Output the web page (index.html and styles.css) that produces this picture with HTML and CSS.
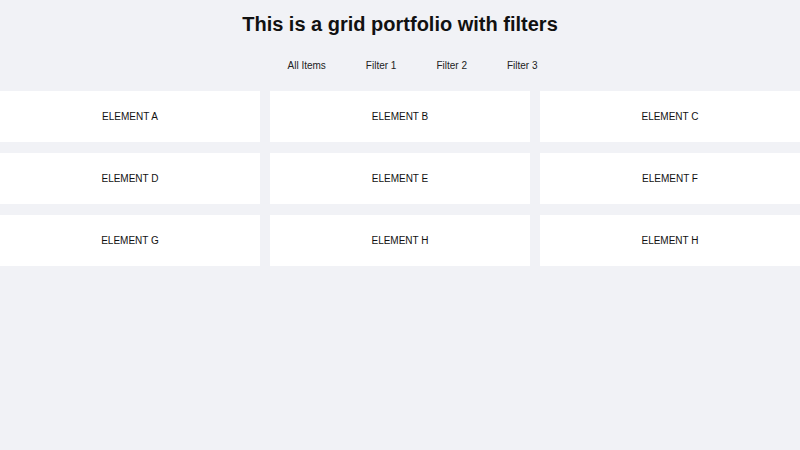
FILE: index.html
```html
<!DOCTYPE html>
<html lang="en">
<head>
  <meta charset="UTF-8">
  <meta name="viewport" content="width=device-width, initial-scale=1.0">
  <title>Grid portfolio</title>
  <link rel="stylesheet" href="styles.css">
</head>
<body>
  <h1>This is a grid portfolio with filters</h1>

  <div class="filters">
    <button class="filter" data-filter="all">All Items</button>
    <button class="filter" data-filter="1">Filter 1</button>
    <button class="filter" data-filter="2">Filter 2</button>
    <button class="filter" data-filter="3">Filter 3</button>
  </div>

  <div class="grid">
    <div class="item">ELEMENT A</div>
    <div class="item">ELEMENT B</div>
    <div class="item">ELEMENT C</div>
    <div class="item">ELEMENT D</div>
    <div class="item">ELEMENT E</div>
    <div class="item">ELEMENT F</div>
    <div class="item">ELEMENT G</div>
    <div class="item">ELEMENT H</div>
    <div class="item">ELEMENT H</div>
  </div>
</body>
</html>
```

FILE: styles.css
```css
body {
  margin: 0;
  padding: 0;
  font-family: 'Liberation Sans', Arial, sans-serif;
  background: #f1f2f6;
  color: #111;
}

h1 {
  margin: 0;
  padding-top: 12px;
  font-size: 20px;
  line-height: 24px;
  text-align: center;
}

.filters {
  display: flex;
  justify-content: center;
  padding-left: 25px;
  margin-top: 20px;
}

.filter {
  background: none;
  border: none;
  padding: 0 20px;
  font-family: inherit;
  font-size: 10px;
  line-height: 20px;
  color: #222;
  cursor: pointer;
}

.grid {
  display: grid;
  grid-template-columns: repeat(3, 1fr);
  gap: 11px 10px;
  margin-top: 15px;
}

.item {
  background: #fff;
  height: 51px;
  display: flex;
  align-items: center;
  justify-content: center;
  font-size: 10px;
  color: #111;
}
```
